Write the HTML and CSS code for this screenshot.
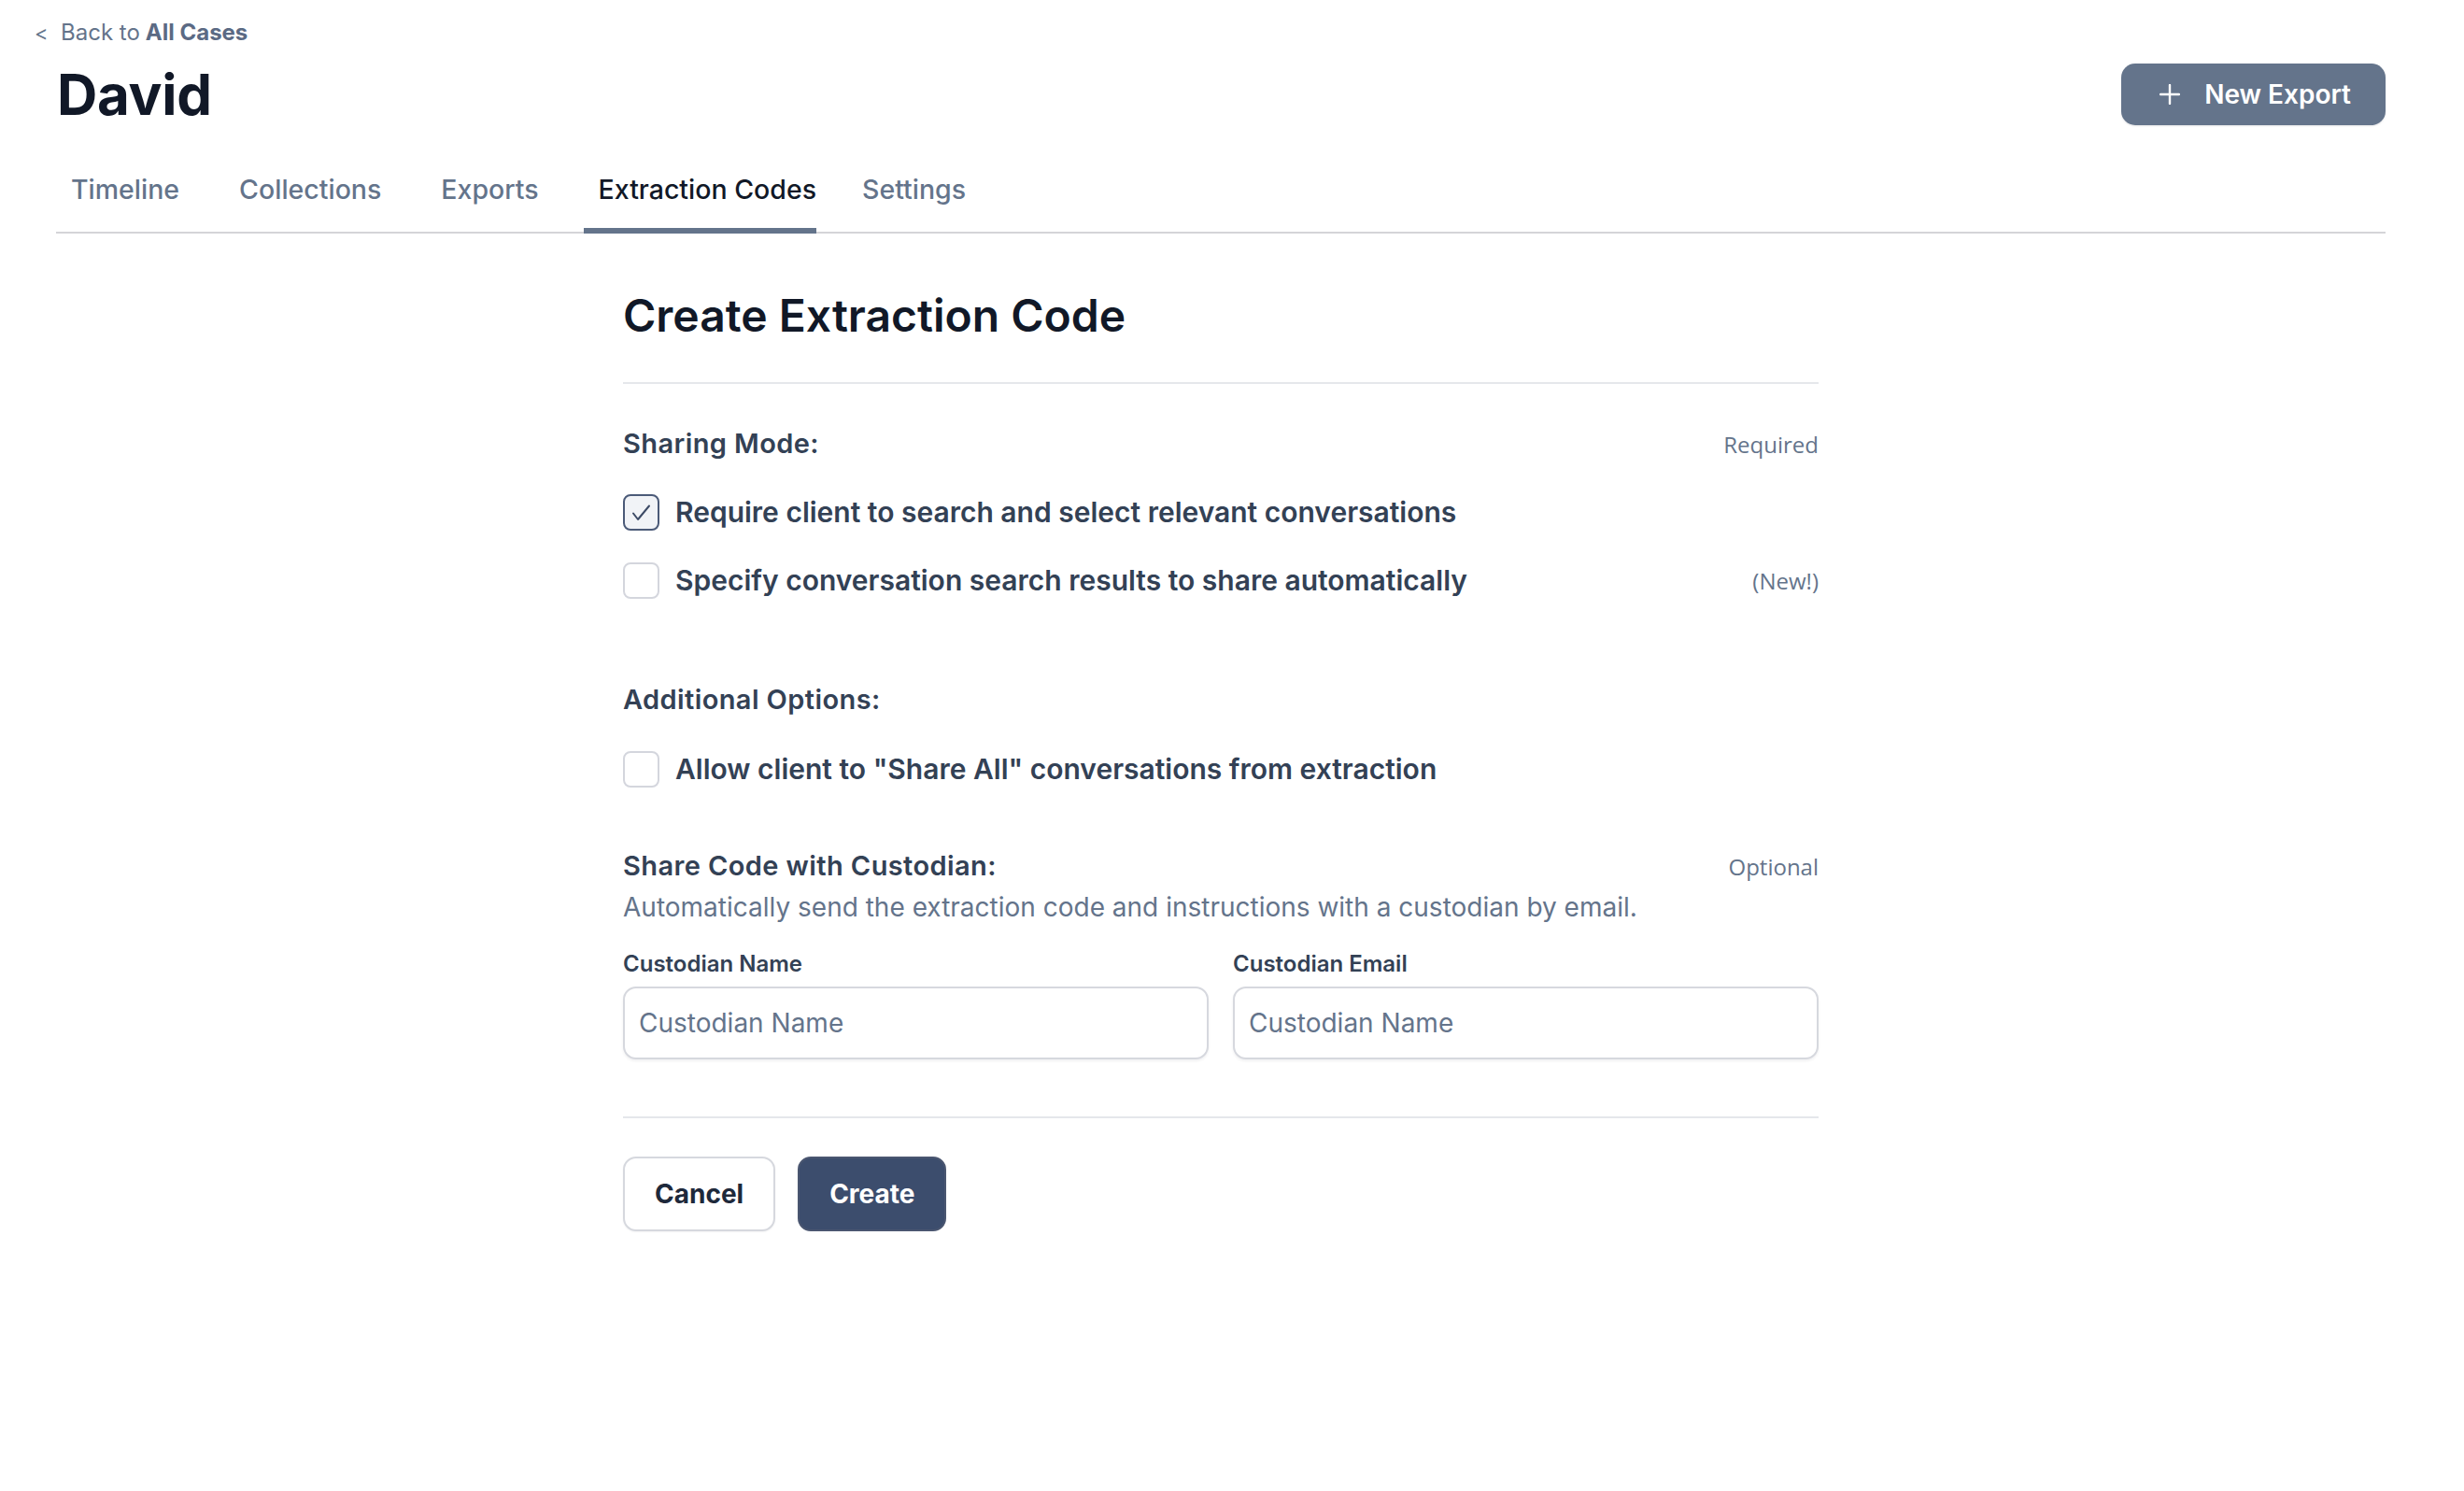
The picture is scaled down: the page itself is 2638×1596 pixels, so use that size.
FILE: index.html
```html
<!DOCTYPE html>
<html lang="en">
<head>
<meta charset="utf-8">
<title>David – Extraction Codes</title>
<link rel="stylesheet" href="styles.css">
</head>
<body>
<div class="page">
  <a class="back-link" href="#"><span class="back-chev">&lt;</span>Back to <b>All Cases</b></a>
  <header class="case-header">
    <h1 class="case-title">David</h1>
    <button class="btn-export" type="button">
      <svg class="plus" viewBox="0 0 22 22" width="22" height="22" aria-hidden="true"><path d="M11 1v20M1 11h20" stroke="#fff" stroke-width="2.4" stroke-linecap="round" fill="none"/></svg>
      <span>New Export</span>
    </button>
  </header>
  <nav class="tabs">
    <a class="tab" href="#">Timeline</a>
    <a class="tab" href="#">Collections</a>
    <a class="tab" href="#">Exports</a>
    <a class="tab active" href="#">Extraction Codes</a>
    <a class="tab" href="#">Settings</a>
  </nav>

  <main class="form">
    <h2 class="form-title">Create Extraction Code</h2>
    <hr class="divider first">

    <div class="section-head">
      <span class="section-label">Sharing Mode:</span>
      <span class="hint">Required</span>
    </div>
    <label class="option">
      <span class="cb checked"><svg viewBox="0 0 35 35" width="35" height="35" aria-hidden="true"><path d="M9 18.5l5 6.5L26 10.5" stroke="#3c4a66" stroke-width="2" fill="none" stroke-linecap="round" stroke-linejoin="round"/></svg></span>
      <span class="option-text">Require client to search and select relevant conversations</span>
    </label>
    <label class="option">
      <span class="cb"></span>
      <span class="option-text">Specify conversation search results to share automatically</span>
      <span class="hint push">(New!)</span>
    </label>

    <div class="section-head gap-xl">
      <span class="section-label">Additional Options:</span>
    </div>
    <label class="option first-after">
      <span class="cb"></span>
      <span class="option-text">Allow client to "Share All" conversations from extraction</span>
    </label>

    <div class="section-head gap-lg">
      <span class="section-label">Share Code with Custodian:</span>
      <span class="hint">Optional</span>
    </div>
    <p class="description">Automatically send the extraction code and instructions with a custodian by email.</p>

    <div class="fields">
      <div class="field">
        <span class="field-label">Custodian Name</span>
        <input class="input" type="text" placeholder="Custodian Name">
      </div>
      <div class="field">
        <span class="field-label">Custodian Email</span>
        <input class="input" type="text" placeholder="Custodian Name">
      </div>
    </div>

    <hr class="divider second">

    <div class="actions">
      <button class="btn btn-cancel" type="button">Cancel</button>
      <button class="btn btn-create" type="button">Create</button>
    </div>
  </main>
</div>
</body>
</html>
```

FILE: styles.css
```css
* { box-sizing: border-box; }

html, body {
  margin: 0;
  background: #ffffff;
}

body {
  font-family: Inter, "Noto Sans", "Liberation Sans", sans-serif;
  color: #334155;
}

.page {
  padding: 19px 84px 80px 60px;
}

.back-link {
  display: inline-flex;
  align-items: center;
  font-size: 24px;
  line-height: 32px;
  color: #64748b;
  text-decoration: none;
  margin-left: -23px;
}

.back-link b {
  font-weight: 700;
  color: #5b6a84;
  margin-left: 6px;
}

.back-chev {
  display: inline-block;
  width: 28px;
  font-size: 22px;
  color: #64748b;
}

.case-header {
  display: flex;
  align-items: center;
  justify-content: space-between;
  height: 66px;
  margin-top: 17px;
}

.case-title {
  margin: 0;
  font-size: 60px;
  font-weight: 700;
  line-height: 66px;
  color: #111827;
  letter-spacing: -0.3px;
  padding-left: 1px;
}

.btn-export {
  display: flex;
  align-items: center;
  gap: 26px;
  height: 66px;
  padding: 0 37px 0 41px;
  border: none;
  border-radius: 15px;
  background: #64748b;
  color: #ffffff;
  font-family: Inter, "Noto Sans", sans-serif;
  font-size: 28px;
  font-weight: 600;
  box-shadow: 0 1px 2px rgba(15, 23, 42, 0.12);
}

.plus { display: block; }

.tabs {
  display: flex;
  gap: 33px;
  margin-top: 49px;
  border-bottom: 2px solid #d4d4d8;
}

.tab {
  display: block;
  padding: 0 15px 21px 16px;
  font-size: 28.5px;
  line-height: 40px;
  font-weight: 500;
  color: #64748b;
  text-decoration: none;
  border-bottom: 6px solid transparent;
  margin-bottom: -2px;
}

.tab.active {
  color: #111827;
  padding-right: 0;
  border-bottom-color: #64748b;
}

.form {
  width: 1280px;
  margin: 59px auto 0;
}

.form-title {
  margin: 0;
  font-size: 48px;
  line-height: 58px;
  font-weight: 600;
  color: #111827;
}

.divider {
  border: none;
  height: 2px;
  background: #e5e7eb;
  margin: 0;
}

.divider.first { margin-top: 42px; }
.divider.second { margin-top: 61px; }

.section-head {
  display: flex;
  align-items: baseline;
  justify-content: space-between;
  margin-top: 44px;
}

.section-head.gap-xl { margin-top: 88px; }
.section-head.gap-lg { margin-top: 64px; }

.section-label {
  font-size: 29px;
  line-height: 40px;
  font-weight: 600;
  letter-spacing: 0.4px;
  color: #334155;
}

.hint {
  font-family: "Open Sans", "Noto Sans", sans-serif;
  font-size: 24px;
  color: #64748b;
}

.option {
  display: flex;
  align-items: center;
  gap: 17px;
  height: 40px;
  margin-top: 33px;
  cursor: pointer;
}

.option.first-after { margin-top: 34px; }

.cb {
  flex: none;
  width: 39px;
  height: 39px;
  border: 2px solid #d4d6dd;
  border-radius: 8px;
  background: #ffffff;
  display: flex;
  align-items: center;
  justify-content: center;
}

.cb.checked {
  border-color: #4b5a78;
  background: #f1f3f7;
}

.option-text {
  font-size: 30px;
  line-height: 40px;
  font-weight: 600;
  color: #334155;
}

.push { margin-left: auto; }

.description {
  margin: 5px 0 0;
  font-size: 28px;
  line-height: 38px;
  color: #64748b;
}

.fields {
  display: grid;
  grid-template-columns: 1fr 1fr;
  gap: 26px;
  margin-top: 26px;
}

.field {
  display: flex;
  flex-direction: column;
  gap: 8px;
}

.field-label {
  font-size: 24px;
  line-height: 32px;
  font-weight: 600;
  color: #334155;
}

.input {
  height: 78px;
  width: 100%;
  border: 2px solid #d6d8de;
  border-radius: 14px;
  padding: 0 15px;
  font-family: Inter, "Noto Sans", sans-serif;
  font-size: 28px;
  color: #334155;
  background: #ffffff;
  box-shadow: 0 2px 3px rgba(15, 23, 42, 0.06);
  outline: none;
}

.input::placeholder { color: #64748b; }

.actions {
  display: flex;
  gap: 24px;
  margin-top: 41px;
}

.btn {
  height: 80px;
  padding: 0 32px;
  border-radius: 14px;
  font-family: Inter, "Noto Sans", sans-serif;
  font-size: 28px;
  font-weight: 700;
}

.btn-cancel {
  background: #ffffff;
  border: 2px solid #d6d8de;
  color: #1e293b;
  box-shadow: 0 1px 2px rgba(15, 23, 42, 0.05);
}

.btn-create {
  background: #3c4d6d;
  border: 2px solid #4a5670;
  color: #ffffff;
}
```
